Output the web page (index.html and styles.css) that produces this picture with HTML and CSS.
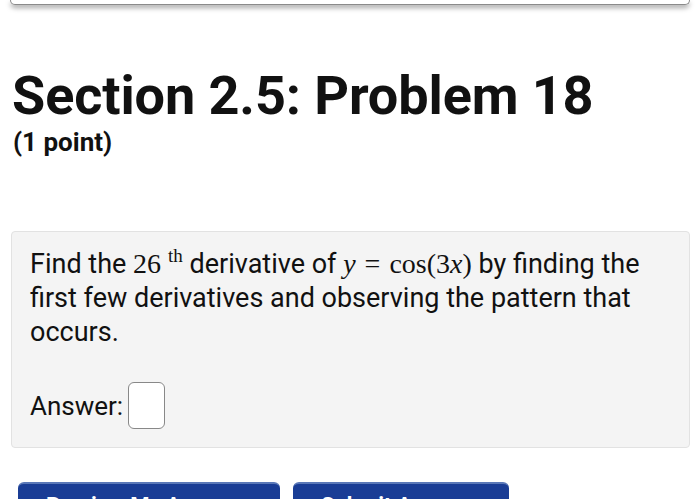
FILE: index.html
```html
<!DOCTYPE html>
<html>
<head>
<meta charset="utf-8">
<link rel="stylesheet" href="styles.css">
</head>
<body>
<div class="top-card"></div>
<h1 class="title">Section 2.5: Problem 18</h1>
<div class="points">(1 point)</div>
<div class="problem">
  <p class="text">Find the <span class="m">26</span><sup class="m sup">th</sup> derivative of <span class="m"><i>y</i><span class="eq">=</span>cos(3<i>x</i>)</span> by finding the first few derivatives and observing the pattern that occurs.</p>
  <div class="answer"><span>Answer:</span><span class="box"></span></div>
</div>
<div class="buttons">
  <div class="btn btn-preview">Preview My Answers</div>
  <div class="btn btn-submit">Submit Answers</div>
</div>
</body>
</html>
```
FILE: styles.css
```css
html, body {
  margin: 0;
  padding: 0;
  background: #ffffff;
  overflow: hidden;
  height: 499px;
}
body {
  font-family: Roboto, "Liberation Sans", sans-serif;
  color: #111;
}
.top-card {
  margin: 0 10px 0 10px;
  height: 4px;
  border: 1px solid #8a8a8a;
  border-top: none;
  border-radius: 0 0 9px 9px;
  box-shadow: 0 3px 5px rgba(0,0,0,0.35);
  background: #fff;
}
.title {
  margin: 60px 0 0 12px;
  font-size: 54px;
  font-weight: 700;
  line-height: 62px;
  letter-spacing: -0.1px;
}
.points {
  margin: 0 0 0 13px;
  font-size: 26px;
  font-weight: 700;
  line-height: 30px;
}
.problem {
  margin: 74px 10px 0 11px;
  background: #f4f4f4;
  border: 1px solid #e2e2e2;
  border-radius: 4px;
  padding: 15px 18px 0 18px;
  height: 200px;
}
.text {
  margin: 0;
  font-size: 27px;
  line-height: 34px;
}
.m {
  font-family: "Liberation Serif", "DejaVu Serif", serif;
  font-size: 28px;
}
.m i {
  font-style: italic;
}
.sup {
  font-size: 19px;
  line-height: 0;
  vertical-align: 11px;
  margin-left: 7px;
}
.eq {
  margin: 0 9px;
}
.answer {
  margin-top: 33px;
  display: flex;
  align-items: center;
  font-size: 26px;
}
.box {
  width: 37px;
  height: 47px;
  margin-left: 5px;
  background: #fff;
  border: 1px solid #888;
  border-radius: 6px;
  box-sizing: border-box;
}
.buttons {
  display: flex;
  gap: 13px;
  margin: 34px 0 0 18px;
}
.btn {
  height: 40px;
  overflow: hidden;
  background: #1a3d95;
  border-top: 2px solid #5a78b8;
  border-radius: 6px 6px 0 0;
  color: #fff;
  font-size: 22px;
  font-weight: 700;
  line-height: 26px;
  padding: 9px 0 0 28px;
  box-sizing: border-box;
}
.btn-preview { width: 262px; }
.btn-submit { width: 216px; }
```
